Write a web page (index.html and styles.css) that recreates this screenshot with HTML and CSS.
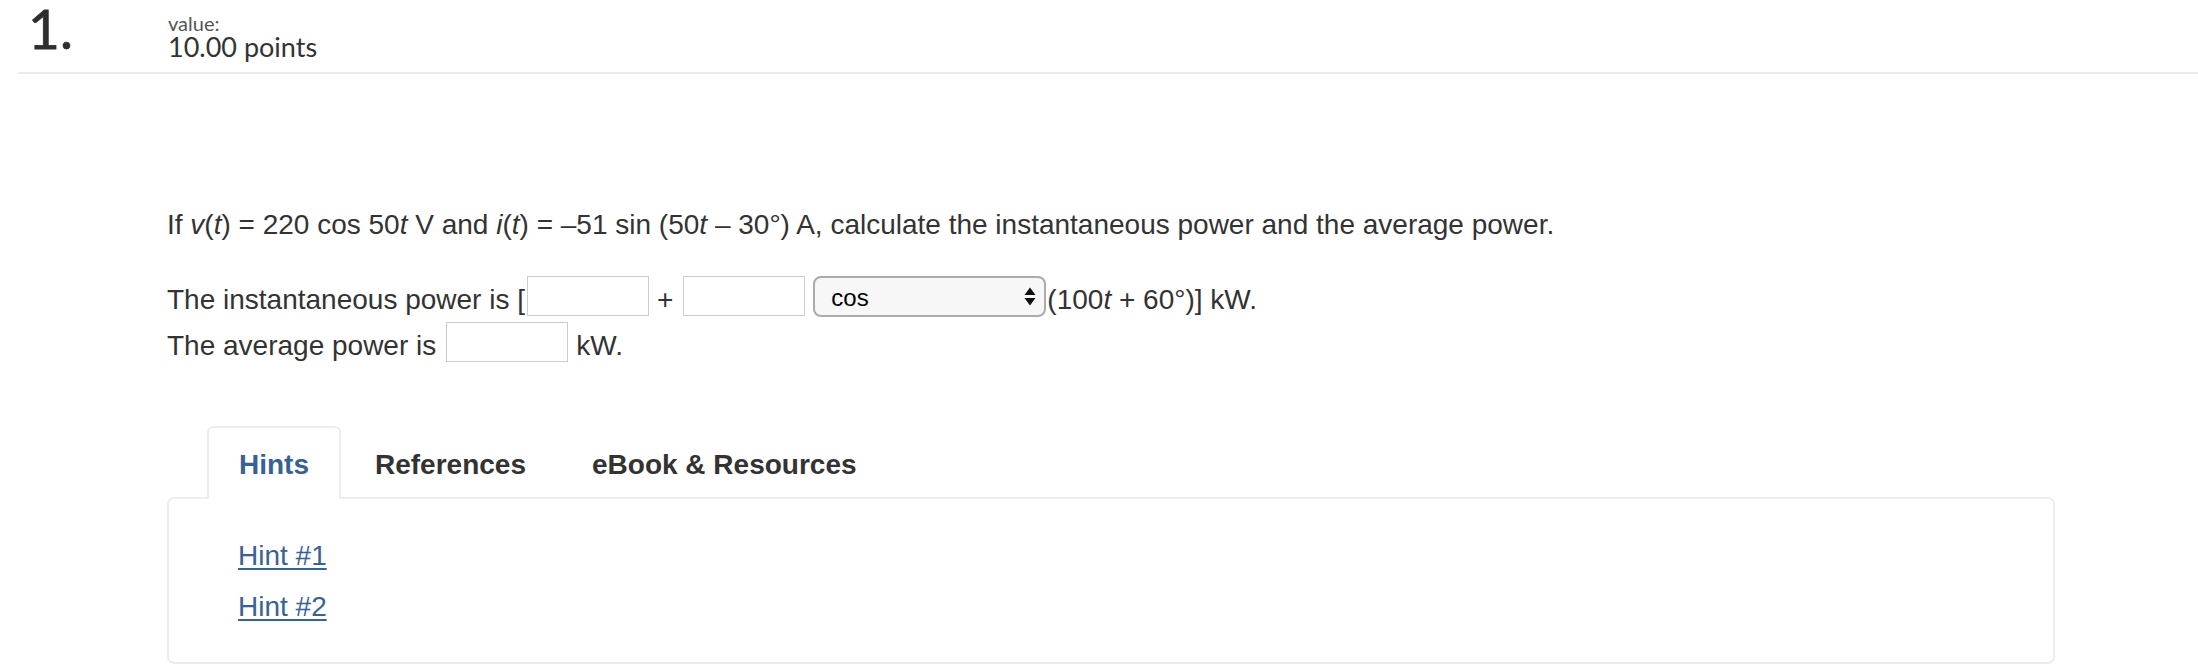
FILE: index.html
```html
<!DOCTYPE html>
<html lang="en">
<head>
<meta charset="utf-8">
<title>Question 1</title>
<link rel="stylesheet" href="styles.css">
</head>
<body>
<div class="header">
  <div class="qnum">1.</div>
  <div class="value">
    <div class="value-label">value:</div>
    <div class="value-points">10.00 points</div>
  </div>
</div>

<div class="question">
  <p class="prompt">If <i>v</i>(<i>t</i>) = 220 cos 50<i>t</i> V and <i>i</i>(<i>t</i>) = –51 sin (50<i>t</i> – 30°) A, calculate the instantaneous power and the average power.</p>

  <div class="row">
    <span class="txt">The instantaneous power is [</span>
    <input class="box box-first" type="text">
    <span class="txt plus">+</span>
    <input class="box" type="text">
    <span class="select-wrap">
      <select class="sel"><option>cos</option><option>sin</option></select>
      <svg class="sel-arrows" width="12" height="20" viewBox="0 0 12 20"><path d="M6 0.5 L11.5 8 L0.5 8 Z M0.5 11 L11.5 11 L6 18.5 Z" fill="#111"/></svg>
    </span>
    <span class="txt after-sel">(100<i>t</i> + 60°)] kW.</span>
  </div>

  <div class="row row-avg">
    <span class="txt">The average power is</span>
    <input class="box box-avg" type="text">
    <span class="txt unit">kW.</span>
  </div>

  <div class="tabs">
    <div class="tab active">Hints</div>
    <div class="tab">References</div>
    <div class="tab">eBook &amp; Resources</div>
  </div>
  <div class="panel">
    <a class="hint" href="#">Hint #1</a>
    <a class="hint" href="#">Hint #2</a>
  </div>
</div>
</body>
</html>
```

FILE: styles.css
```css
html, body {
  margin: 0;
  padding: 0;
  background: #ffffff;
}

body {
  font-family: "Liberation Sans", Arial, sans-serif;
  color: #333333;
}

.header {
  display: flex;
  margin-left: 18px;
  height: 72px;
  border-bottom: 2px solid #ebebeb;
}

.qnum {
  width: 140px;
  padding-left: 10px;
  font-family: Lato, "Open Sans", sans-serif;
  font-size: 55px;
  line-height: 56px;
  color: #2e2e2e;
  -webkit-text-stroke: 0.8px #2e2e2e;
}

.value {
  font-family: Lato, "Open Sans", sans-serif;
  padding-top: 12px;
}

.value-label {
  font-size: 20px;
  line-height: 22px;
  color: #555555;
}

.value-points {
  font-size: 27px;
  line-height: 26px;
  color: #333333;
}

.question {
  padding-left: 167px;
  padding-right: 143px;
  font-size: 28px;
}

.prompt {
  margin: 135px 0 0 0;
  line-height: 32px;
}

.row {
  display: flex;
  align-items: center;
  height: 40px;
  margin-top: 35px;
}

.row-avg {
  margin-top: 6px;
}

.txt {
  padding-top: 7px;
  line-height: 32px;
  white-space: nowrap;
}

.box {
  box-sizing: border-box;
  width: 122px;
  height: 40px;
  margin: 0;
  border: 1px solid #cccccc;
  border-radius: 0;
  background: #ffffff;
  padding: 0 6px;
  font-size: 22px;
}

.box-first {
  margin-left: 2px;
}

.plus {
  margin: 0 10px 0 8px;
}

.box-avg {
  margin-left: 10px;
}

.unit {
  margin-left: 8px;
}

.select-wrap {
  position: relative;
  display: inline-flex;
  margin-left: 8px;
}

.sel {
  -webkit-appearance: none;
  appearance: none;
  box-sizing: border-box;
  width: 233px;
  height: 41px;
  margin: 0;
  padding: 2px 0 0 16px;
  border: 2px solid #ababab;
  border-radius: 8px;
  background: #f7f7f7;
  font-family: "Liberation Sans", Arial, sans-serif;
  font-size: 24px;
  color: #000000;
}

.sel-arrows {
  position: absolute;
  right: 10px;
  top: 11px;
  pointer-events: none;
}

.after-sel {
  margin-left: 1px;
}

.tabs {
  display: flex;
  margin-top: 64px;
  margin-left: 40px;
  position: relative;
  z-index: 1;
}

.tab {
  padding: 21px 30px 18px 30px;
  margin-right: 2px;
  margin-bottom: -2px;
  border: 2px solid transparent;
  border-bottom: none;
  border-radius: 6px 6px 0 0;
  font-size: 28px;
  font-weight: bold;
  line-height: 32px;
  color: #333333;
  background: transparent;
}

.tab.active {
  border-color: #ededed;
  background: #ffffff;
  color: #3a6194;
}

.panel {
  display: flex;
  flex-direction: column;
  align-items: flex-start;
  gap: 19px;
  border: 2px solid #ededed;
  border-radius: 7px;
  padding: 41px 69px 39px 69px;
}

.hint {
  font-size: 28px;
  line-height: 32px;
  color: #3a6194;
  text-decoration: underline;
  text-underline-offset: 3px;
}
```
